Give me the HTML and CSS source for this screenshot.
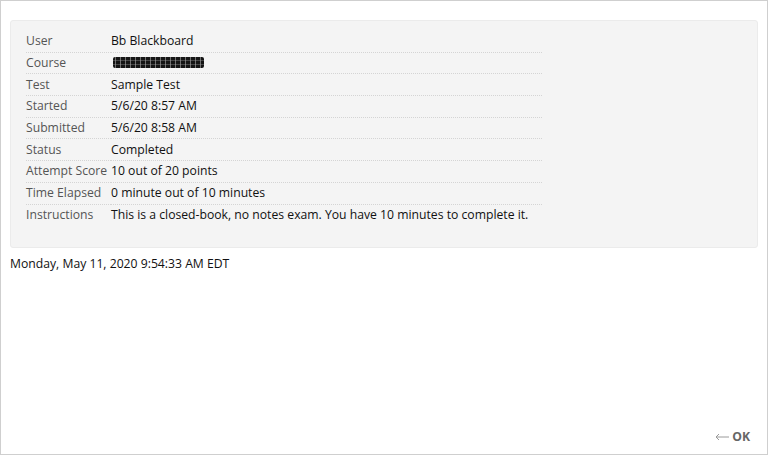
FILE: index.html
```html
<!DOCTYPE html>
<html>
<head>
<meta charset="utf-8">
<link rel="stylesheet" href="styles.css">
</head>
<body>
<div class="page">
  <div class="panel">
    <table class="details">
      <tr><th>User</th><td>Bb Blackboard</td></tr>
      <tr><th>Course</th><td><span class="redacted"></span></td></tr>
      <tr><th>Test</th><td>Sample Test</td></tr>
      <tr><th>Started</th><td>5/6/20 8:57 AM</td></tr>
      <tr><th>Submitted</th><td>5/6/20 8:58 AM</td></tr>
      <tr><th>Status</th><td>Completed</td></tr>
      <tr><th>Attempt Score</th><td>10 out of 20 points</td></tr>
      <tr><th>Time Elapsed</th><td>0 minute out of 10 minutes</td></tr>
      <tr class="last"><th>Instructions</th><td>This is a closed-book, no notes exam. You have 10 minutes to complete it.</td></tr>
    </table>
  </div>
  <div class="timestamp">Monday, May 11, 2020 9:54:33 AM EDT</div>
  <div class="footer">
    <span class="ok"><svg class="arrow" width="14" height="8" viewBox="0 0 14 8"><path d="M14 4H1M4 1L1 4l3 3" fill="none" stroke="#9a9a9a" stroke-width="1"/></svg>OK</span>
  </div>
</div>
</body>
</html>
```
FILE: styles.css
```css
html, body {
  margin: 0;
  padding: 0;
  background: #fff;
}
body {
  font-family: "Open Sans", "Liberation Sans", sans-serif;
  font-size: 12.2px;
  color: #111;
}
.page {
  box-sizing: border-box;
  width: 768px;
  height: 455px;
  border: 1px solid #cfcfcf;
  padding: 19px 9px 8px 9px;
  display: flex;
  flex-direction: column;
}
.panel {
  background: #f4f4f4;
  border: 1px solid #ebebeb;
  border-radius: 3px;
  padding: 10px 15px 22px 15px;
}
.details {
  border-collapse: collapse;
  width: 516px;
}
.details th, .details td {
  padding: 0;
  height: 20.7px;
  line-height: 20px;
  border-bottom: 1px dotted #d4d4d4;
  vertical-align: middle;
  white-space: nowrap;
}
.details tr.last th, .details tr.last td {
  border-bottom: none;
}
.details th {
  text-align: left;
  font-weight: normal;
  color: #555;
  width: 83px;
  padding-right: 2px;
}
.details td {
  color: #111;
}
.redacted {
  display: inline-block;
  width: 91px;
  height: 11px;
  vertical-align: -1px;
  margin-left: 2px;
  border-radius: 2px;
  background:
    repeating-linear-gradient(90deg, transparent 0 2px, rgba(170,170,170,0.6) 2px 3px, transparent 3px 5px),
    repeating-linear-gradient(0deg, transparent 0 3px, rgba(120,120,120,0.5) 3px 4px),
    #141414;
  filter: blur(0.5px);
}
.timestamp {
  margin-top: 7px;
  color: #111;
  line-height: 18px;
}
.footer {
  margin-top: auto;
  display: flex;
  justify-content: flex-end;
  padding-right: 8px;
}
.ok {
  display: flex;
  align-items: center;
  gap: 3px;
  font-weight: bold;
  color: #666;
  font-size: 12.2px;
  line-height: 18px;
}
.arrow {
  display: block;
}
```
